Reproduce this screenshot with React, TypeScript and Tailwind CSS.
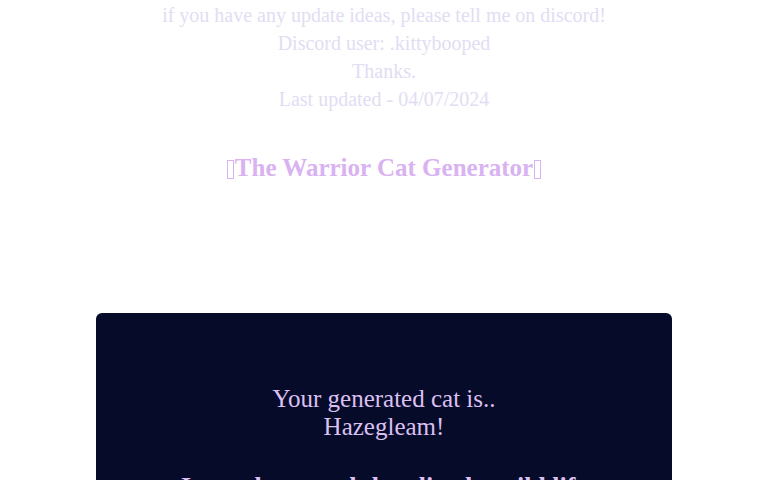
export default function App() {
  const box = (
    <span className="inline-block w-[7px] h-[19px] border border-[#d9b2f2] align-[-3px] mx-[1px]" />
  );
  return (
    <div className="min-h-screen bg-white font-['Liberation_Serif',serif] text-center">
      <div className="pt-[1px] text-[20px] leading-[28px] text-[#e2ddf3]">
        <p>if you have any update ideas, please tell me on discord!</p>
        <p>Discord user: .kittybooped</p>
        <p>Thanks.</p>
        <p>Last updated - 04/07/2024</p>
      </div>
      <h1 className="mt-[41px] text-[25px] leading-[28px] font-bold text-[#d9b2f2]">
        {box}The Warrior Cat Generator{box}
      </h1>
      <div className="h-[131px]" />
      <div className="mx-auto w-[576px] rounded-[6px] bg-[#050b28] pt-[72px] pb-[40px] text-[#dcc0f2]">
        <p className="text-[25px] leading-[28px]">
          Your generated cat is..
          <br />
          Hazegleam!
        </p>
        <p className="mt-[30px] px-6 text-[26px] leading-[32px] font-bold">
          It was born and then lived a wild life
        </p>
      </div>
    </div>
  );
}
